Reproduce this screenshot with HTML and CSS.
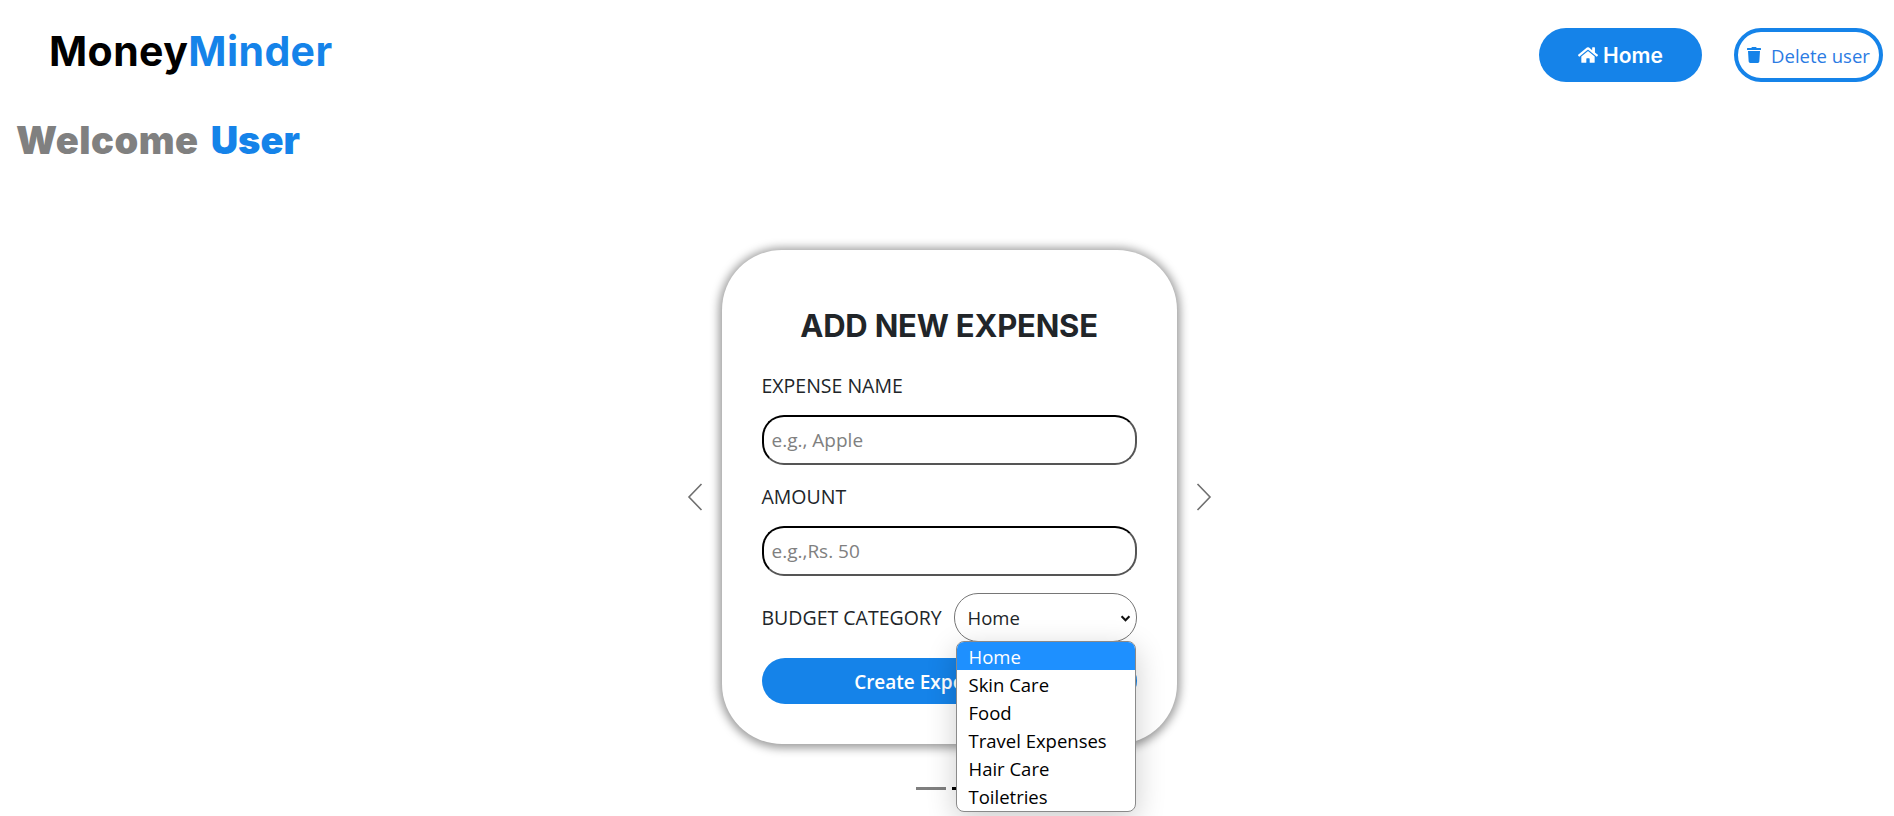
FILE: index.html
```html
<!DOCTYPE html>
<html lang="en">
<head>
<meta charset="utf-8">
<title>MoneyMinder</title>
<link rel="stylesheet" href="styles.css">
</head>
<body>
<header class="topbar">
  <div class="logo">Money<span class="accent">Minder</span></div>
  <nav class="actions">
    <a class="btn-home" href="#">
      <svg class="icon-home" viewBox="0 0 576 512" aria-hidden="true"><path fill="currentColor" d="M280.4 148.3 96 300.1V464a16 16 0 0 0 16 16l112.100-.3a16 16 0 0 0 15.900-16V368a16 16 0 0 1 16-16h64a16 16 0 0 1 16 16v95.600a16 16 0 0 0 16 16.100L464 480a16 16 0 0 0 16-16V300L295.700 148.300a12.200 12.200 0 0 0-15.300 0zM571.600 251.500 488 182.600V44.100a12 12 0 0 0-12-12h-56a12 12 0 0 0-12 12v72.600L318.500 43a48 48 0 0 0-61 0L4.300 251.500a12 12 0 0 0-1.600 16.900l25.500 31A12 12 0 0 0 45.200 301l235.200-193.700a12.200 12.200 0 0 1 15.300 0L530.900 301a12 12 0 0 0 16.900-1.600l25.500-31a12 12 0 0 0-1.700-16.900z"/></svg>
      Home
    </a>
    <a class="btn-delete" href="#">
      <svg class="icon-trash" viewBox="0 0 448 512" aria-hidden="true"><path fill="currentColor" d="M432 32H312l-9.400-18.700A24 24 0 0 0 281.100 0H166.800a23.700 23.700 0 0 0-21.400 13.300L136 32H16A16 16 0 0 0 0 48v32a16 16 0 0 0 16 16h416a16 16 0 0 0 16-16V48a16 16 0 0 0-16-16zM53.200 467a48 48 0 0 0 47.900 45h245.800a48 48 0 0 0 47.900-45L416 128H32z"/></svg>
      Delete user
    </a>
  </nav>
</header>
<h2 class="welcome">Welcome <span class="accent">User</span></h2>
<main class="carousel">
  <button class="arrow" aria-label="Previous">
    <svg viewBox="0 0 16 28" class="arrow-icon"><path d="M14.500 1 2 14l12.500 13" fill="none" stroke="currentColor" stroke-width="1.600"/></svg>
  </button>
  <form class="card">
    <h1 class="card-title">ADD NEW EXPENSE</h1>
    <label class="field-label">EXPENSE NAME</label>
    <input class="field-input" type="text" placeholder="e.g., Apple">
    <label class="field-label">AMOUNT</label>
    <input class="field-input" type="text" placeholder="e.g.,Rs. 50">
    <div class="category-row">
      <label class="category-label">BUDGET CATEGORY</label>
      <div class="select-wrap">
        <select class="category-select">
          <option>Home</option>
        </select>
        <svg class="select-chevron" viewBox="0 0 12 8" aria-hidden="true"><path d="M1.500 1.500 6 6l4.500-4.500" fill="none" stroke="currentColor" stroke-width="2.400"/></svg>
        <ul class="dropdown">
          <li class="selected">Home</li>
          <li>Skin Care</li>
          <li>Food</li>
          <li>Travel Expenses</li>
          <li>Hair Care</li>
          <li>Toiletries</li>
        </ul>
      </div>
    </div>
    <button class="submit" type="button">Create Expense</button>
  </form>
  <button class="arrow" aria-label="Next">
    <svg viewBox="0 0 16 28" class="arrow-icon"><path d="M1.500 1 14 14 1.500 27" fill="none" stroke="currentColor" stroke-width="1.600"/></svg>
  </button>
</main>
<div class="indicators"><span class="bar"></span><span class="bar active"></span></div>
</body>
</html>
```
FILE: styles.css
```css
* { box-sizing: border-box; }
html, body { margin: 0; height: 100%; overflow: hidden; background: #fff; }
body { font-family: "Open Sans", "Noto Sans", sans-serif; color: #212529; }
.accent { color: #1583e9; }
.topbar { display: flex; justify-content: space-between; align-items: flex-start; padding: 28px 11px 0 49px; height: 102px; }
.logo { font-family: Inter, sans-serif; font-weight: 700; font-size: 41px; line-height: 48px; color: #000; letter-spacing: 0.4px; margin-top: -1px; }
.actions { display: flex; gap: 33px; align-items: flex-start; }
.btn-home { display: flex; align-items: center; justify-content: center; gap: 5px; width: 163px; height: 54px; border-radius: 27px; background: #1583e9; color: #fff; font-family: Inter, sans-serif; font-weight: 600; font-size: 21px; text-decoration: none; }
.icon-home { width: 20px; height: 18px; }
.btn-delete { display: flex; align-items: center; justify-content: center; gap: 10px; width: 149px; height: 54px; margin-left: -1px; border: 4px solid #1583e9; border-radius: 27px; color: #2b7be3; font-size: 18.500px; text-decoration: none; white-space: nowrap; }
.icon-trash { width: 14px; height: 16px; color: #1583e9; }
.welcome { margin: 14px 0 0 16px; font-family: Inter, sans-serif; font-weight: 900; font-size: 38px; line-height: 48px; color: #808080; letter-spacing: 0.5px; word-spacing: 4px; }
.welcome .accent { letter-spacing: 0; }
.carousel { display: flex; justify-content: center; align-items: center; gap: 19px; margin-top: 86px; padding-left: 4px; }
.arrow { border: 0; background: none; padding: 0; color: #6f6f6f; display: flex; }
.arrow-icon { width: 16px; height: 28px; }
.card { width: 455px; height: 494px; padding: 50px 40px 0; border-radius: 60px; background: #fff; box-shadow: 0 1px 10px 3px rgba(0,0,0,.4); display: flex; flex-direction: column; }
.card-title { margin: 2px 0 21px; text-align: center; font-family: Inter, sans-serif; font-weight: 700; font-size: 31px; line-height: 48px; letter-spacing: -0.2px; color: #212529; }
.field-label { font-size: 19.500px; font-weight: 500; line-height: 29px; height: 27px; }
.field-input { width: 100%; height: 50px; margin: 17px 0; padding: 0 8px; border-radius: 22px; border-width: 2px; border-style: inset; border-color: #000 #555 #555 #000; font-family: inherit; font-size: 19px; background: #fff; }
.field-input::placeholder { color: #808080; }
.category-row { display: flex; align-items: center; justify-content: space-between; height: 49px; }
.category-label { font-size: 19.500px; font-weight: 500; }
.select-wrap { position: relative; width: 183px; height: 49px; }
.category-select { width: 100%; height: 100%; padding: 0 13px; appearance: none; border: 1px solid #767676; border-radius: 24px; background: #fff; font-family: inherit; font-size: 18.500px; color: #212529; }
.select-chevron { position: absolute; top: 22px; right: 6px; width: 11px; height: 7px; color: #111; pointer-events: none; }
.dropdown { position: absolute; top: 48px; left: 2px; z-index: 5; width: 180px; height: 171px; margin: 0; padding: 0; list-style: none; background: #fff; border: 1px solid #8a8a8a; border-radius: 8px; overflow: hidden; box-shadow: 0 8px 30px rgba(0,0,0,.2); font-size: 18.500px; line-height: 30px; color: #000; }
.dropdown li { height: 28px; padding-left: 12px; }
.dropdown .selected { background: #1e90ff; color: #fff; }
.submit { margin-top: 16px; width: 100%; height: 46px; padding: 2px 48px 0 0; border: 0; border-radius: 23px; background: #1583e9; color: #fff; font-family: inherit; font-size: 19px; font-weight: 600; }
.indicators { display: flex; justify-content: center; gap: 6px; margin-top: 43px; padding-left: 4px; }
.bar { width: 30px; height: 3px; background: #7f7f7f; }
.bar.active { background: #000; }
```
